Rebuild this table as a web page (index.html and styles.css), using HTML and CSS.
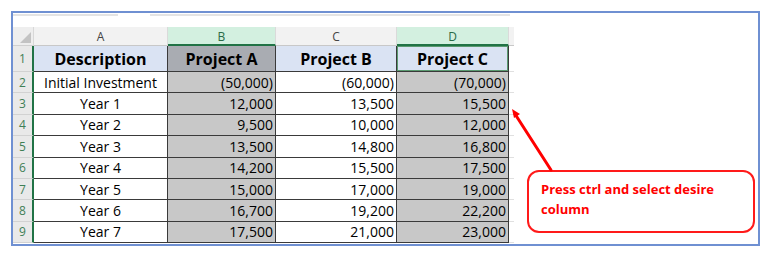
FILE: index.html
```html
<!DOCTYPE html>
<html>
<head>
<meta charset="utf-8">
<link rel="stylesheet" href="styles.css">
</head>
<body>
<div class="frame">
  <div class="topstrip"><span class="seg seg1"></span><span class="seg seg2"></span></div>
  <div class="sheet">
    <div class="corner"><span class="tri"></span></div>
    <div class="ch">A</div>
    <div class="ch sel">B</div>
    <div class="ch">C</div>
    <div class="ch sel">D</div>
    <div class="ch e"></div>

    <div class="rh">1</div>
    <div class="c hd">Description</div>
    <div class="c hd hsel">Project A</div>
    <div class="c hd">Project B</div>
    <div class="c hd active">Project C</div>
    <div class="e-cell"></div>

    <div class="rh">2</div>
    <div class="c txt">Initial Investment</div>
    <div class="c num g">(50,000)</div>
    <div class="c num">(60,000)</div>
    <div class="c num g">(70,000)</div>
    <div class="e-cell"></div>

    <div class="rh">3</div>
    <div class="c txt">Year 1</div>
    <div class="c num g">12,000</div>
    <div class="c num">13,500</div>
    <div class="c num g">15,500</div>
    <div class="e-cell"></div>

    <div class="rh">4</div>
    <div class="c txt">Year 2</div>
    <div class="c num g">9,500</div>
    <div class="c num">10,000</div>
    <div class="c num g">12,000</div>
    <div class="e-cell"></div>

    <div class="rh">5</div>
    <div class="c txt">Year 3</div>
    <div class="c num g">13,500</div>
    <div class="c num">14,800</div>
    <div class="c num g">16,800</div>
    <div class="e-cell"></div>

    <div class="rh">6</div>
    <div class="c txt">Year 4</div>
    <div class="c num g">14,200</div>
    <div class="c num">15,500</div>
    <div class="c num g">17,500</div>
    <div class="e-cell"></div>

    <div class="rh">7</div>
    <div class="c txt">Year 5</div>
    <div class="c num g">15,000</div>
    <div class="c num">17,000</div>
    <div class="c num g">19,000</div>
    <div class="e-cell"></div>

    <div class="rh">8</div>
    <div class="c txt">Year 6</div>
    <div class="c num g">16,700</div>
    <div class="c num">19,200</div>
    <div class="c num g">22,200</div>
    <div class="e-cell"></div>

    <div class="rh">9</div>
    <div class="c txt">Year 7</div>
    <div class="c num g">17,500</div>
    <div class="c num">21,000</div>
    <div class="c num g">23,000</div>
    <div class="e-cell"></div>
  </div>
  <div class="callout">Press ctrl and select desire<br>column</div>
  <svg class="arrow" width="768" height="256" viewBox="0 0 768 256">
    <line x1="515" y1="114" x2="551" y2="170" stroke="#ff0000" stroke-width="3" stroke-linecap="round"/>
    <polygon points="512,109 520,114 514,118" fill="#ff0000"/>
  </svg>
</div>
</body>
</html>
```
FILE: styles.css
```css
html, body {
  margin: 0;
  padding: 0;
  background: #ffffff;
}
body {
  width: 768px;
  height: 256px;
  overflow: hidden;
  padding: 11px 0 0 11px;
  box-sizing: border-box;
  font-family: "Open Sans", "Liberation Sans", sans-serif;
}
.frame {
  position: relative;
  width: 749px;
  height: 235px;
  border: 2px solid #6f90d2;
  box-sizing: border-box;
  background: #ffffff;
}
.topstrip {
  height: 14px;
  position: relative;
  display: flex;
  gap: 0;
}
.seg {
  display: block;
  height: 2px;
  margin-top: 1px;
  background: #e4e4e4;
}
.seg1 { width: 105px; }
.seg2 { width: 360px; margin-left: 32px; }
.sheet {
  display: grid;
  grid-template-columns: 21px 134px 108px 121px 112px 5px;
  grid-template-rows: 19px 26px repeat(8, 21.375px);
  width: 501px;
}
.corner {
  background: #eeeeee;
  position: relative;
  border-right: 1px solid #d8d8d8;
  border-bottom: 1px solid #d0d0d0;
}
.tri {
  position: absolute;
  right: 2px;
  bottom: 2px;
  width: 0;
  height: 0;
  border-left: 11px solid transparent;
  border-bottom: 11px solid #c3c3c3;
}
.ch {
  background: #f2f2f2;
  color: #444444;
  font-size: 12px;
  display: flex;
  align-items: center;
  justify-content: center;
  border-right: 1px solid #dadada;
  border-bottom: 1px solid #c8c8c8;
  box-sizing: border-box;
  padding-top: 1px;
}
.ch.sel {
  background: #d3f0e0;
  color: #2b6b47;
  border-bottom: 2px solid #217346;
}
.ch.e {
  border-right: none;
}
.rh {
  background: #e9e9e9;
  color: #3f7f55;
  font-size: 12px;
  display: flex;
  align-items: center;
  justify-content: center;
  border-right: 2px solid #217346;
  border-bottom: 1px solid #d2d2d2;
  box-sizing: border-box;
}
.c {
  border-right: 1px solid #3a3a3a;
  border-bottom: 1.5px solid #3a3a3a;
  box-sizing: border-box;
  display: flex;
  align-items: center;
  color: #000000;
  font-size: 14px;
  white-space: nowrap;
  overflow: hidden;
}
.hd {
  background: #dae3f3;
  font-weight: 700;
  font-size: 16px;
  justify-content: center;
  padding-top: 1px;
}
.hd.hsel {
  background: #a9acb2;
}
.hd.active {
  box-shadow: inset 0 0 0 1px #5a9a70;
}
.txt {
  justify-content: center;
  background: #ffffff;
}
.num {
  justify-content: flex-end;
  padding-right: 2px;
  background: #ffffff;
}
.num.g {
  background: #c8c8c8;
}
.e-cell {
  border-bottom: 1px solid #e0e0e0;
  box-sizing: border-box;
  position: relative;
}
.callout {
  position: absolute;
  left: 514px;
  top: 157px;
  width: 228px;
  height: 63px;
  box-sizing: border-box;
  border: 2px solid #ff1a1a;
  border-radius: 12px;
  padding: 7px 0 0 12px;
  color: #ff0000;
  font-weight: 700;
  font-size: 13px;
  line-height: 20px;
  background: #ffffff;
}
.arrow {
  position: absolute;
  left: -13px;
  top: -13px;
  pointer-events: none;
}
```
